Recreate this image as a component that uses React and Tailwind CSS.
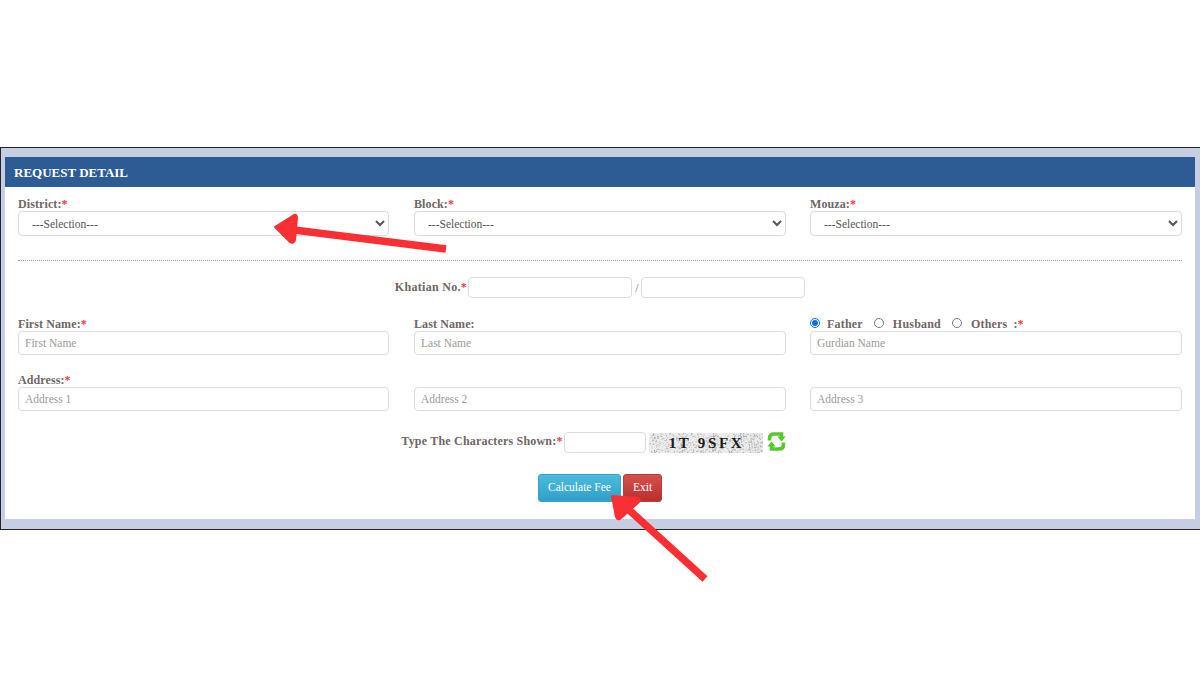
import React from "react";

const font = { fontFamily: '"Liberation Serif", "Times New Roman", serif' };
const Star = () => <span className="text-[#e8393f]">*</span>;

const Label = ({ children, req }) => (
  <label className="block h-[14px] text-[12px] leading-[14px] font-bold text-[#6f6666] tracking-[0.1px]">
    {children}
    {req && <Star />}
  </label>
);

const Select = () => (
  <select className="block w-full h-[25px] rounded-[4px] border border-[#d6dbe0] bg-white pl-[9px] pr-[2px] text-[11.5px] text-[#555]">
    <option>---Selection---</option>
  </select>
);

const Input = ({ placeholder, className = "w-full h-[24px]" }) => (
  <input
    placeholder={placeholder}
    className={`block rounded-[4px] border border-[#d9dde1] bg-white px-[6px] text-[11.5px] text-[#555] placeholder:text-[#9a9a9a] ${className}`}
  />
);

const Radio = ({ checked, label, first }) => (
  <>
    <input
      type="radio"
      name="relation"
      defaultChecked={checked}
      className="m-0 h-[10px] w-[10px] accent-[#0b6ff0] -translate-y-[1px]"
    />
    <span className={`${first ? "ml-[7px]" : "ml-[9px]"} mr-[11px] text-[12px] leading-[15px] font-bold text-[#6f6666] tracking-[0.2px]`}>{label}</span>
  </>
);

function noise() {
  const dots = [];
  let s = 37;
  for (let i = 0; i < 650; i++) {
    s = (s * 9301 + 49297) % 233280;
    const x = (s / 233280) * 114;
    s = (s * 9301 + 49297) % 233280;
    const y = (s / 233280) * 20;
    s = (s * 9301 + 49297) % 233280;
    const g = 140 + Math.floor((s / 233280) * 90);
    dots.push(<rect key={i} x={x} y={y} width="1" height="1" fill={`rgb(${g},${g},${g})`} />);
  }
  return dots;
}

const Captcha = () => (
  <div className="relative ml-[3px] h-[20px] w-[114px] bg-[#ececec] overflow-hidden">
    <svg className="absolute inset-0" width="114" height="20">{noise()}</svg>
    <span className="absolute left-[20px] top-0 text-[15px] leading-[20px] font-bold text-[#1c1c1c] tracking-[2.7px] whitespace-pre">
      1T 9SFX
    </span>
  </div>
);

const Refresh = () => (
  <svg width="19" height="21" viewBox="0 0 19 21" className="ml-[4px] -translate-y-[1px]">
    <g fill="none" stroke="#58c92a" strokeWidth="3.6">
      <path d="M2.6 9.5 V7 Q2.6 3 7 3 H14.5 V6" />
      <path d="M16.4 11.5 V14 Q16.4 18 12 18 H4.5 V15" />
    </g>
    <path d="M10.3 5.6 H18.7 L14.5 10.4 Z" fill="#58c92a" />
    <path d="M0.3 15.4 H8.7 L4.5 10.6 Z" fill="#58c92a" />
  </svg>
);

const Arrows = () => (
  <svg className="absolute left-0 top-0 pointer-events-none" width="1200" height="675">
    <path d="M446 249 L294 230" stroke="#f92f33" strokeWidth="7.5" fill="none" />
    <path d="M275 227 L294 215 Q297 214 297 218 L295 240 Q294 244 290 242 Z" fill="#f92f33" stroke="#f92f33" strokeWidth="2" strokeLinejoin="round" />
    <path d="M705 579 L628 509" stroke="#f92f33" strokeWidth="7.5" fill="none" />
    <path d="M612 496 L637 498 Q641 499 639 502 L621 518 Q618 521 616 517 Z" fill="#f92f33" stroke="#f92f33" strokeWidth="2" strokeLinejoin="round" />
  </svg>
);

export default function App() {
  return (
    <div className="relative h-[675px] w-[1200px] overflow-hidden bg-white pt-[147px]" style={font}>
      <div className="h-[383px] border-y border-l border-[#23232f] border-r-0 bg-[#c6cee4] pl-[4px] pr-[5px] pt-[9px]">
        <div className="h-[362px] bg-white">
          <div className="h-[30px] bg-[#2d5b94] pl-[9px] text-[13px] leading-[31px] font-bold text-white">
            REQUEST DETAIL
          </div>
          <div className="px-[13px]">
            <div className="mt-[10px] grid grid-cols-[371px_372px_1fr] gap-x-[25px]">
              <div><Label req>District:</Label><Select /></div>
              <div><Label req>Block:</Label><Select /></div>
              <div className="-ml-[1px]"><Label req>Mouza:</Label><Select /></div>
            </div>

            <div className="mt-[24px] border-t border-dotted border-[#9a9a9a]" />

            <div className="mt-[16px] flex h-[21px] items-center justify-center">
              <span className="mr-[1px] -translate-y-[1px] text-[12px] font-bold text-[#6f6666] tracking-[0.3px]">Khatian No.<Star /></span>
              <Input className="w-[164px] h-[21px]" />
              <span className="mx-[3px] w-[3px] text-[12px] text-[#777]">/</span>
              <Input className="w-[164px] h-[21px]" />
            </div>

            <div className="mt-[19px] grid grid-cols-[371px_372px_1fr] gap-x-[25px]">
              <div><Label req>First Name:</Label><Input placeholder="First Name" /></div>
              <div><Label>Last Name:</Label><Input placeholder="Last Name" /></div>
              <div className="-ml-[1px]">
                <div className="flex h-[14px] items-center">
                  <Radio checked first label="Father" />
                  <Radio label="Husband" />
                  <Radio label="Others" />
                  <span className="-ml-[8px] text-[12px] font-bold text-[#6f6666]">&nbsp;:<Star /></span>
                </div>
                <Input placeholder="Gurdian Name" />
              </div>
            </div>

            <div className="mt-[18px] grid grid-cols-[371px_372px_1fr] gap-x-[25px]">
              <div><Label req>Address:</Label><Input placeholder="Address 1" /></div>
              <div className="pt-[14px]"><Input placeholder="Address 2" /></div>
              <div className="-ml-[1px] pt-[14px]"><Input placeholder="Address 3" /></div>
            </div>

            <div className="mt-[21px] flex h-[21px] items-center justify-center pr-[13px]">
              <span className="mr-[1px] -translate-y-[2px] text-[12px] font-bold text-[#6f6666] tracking-[0.2px]">Type The Characters Shown:<Star /></span>
              <Input className="w-[82px] h-[21px]" />
              <Captcha />
              <Refresh />
            </div>

            <div className="mt-[21px] flex justify-center gap-[2px]">
              <button className="h-[28px] w-[83px] rounded-[3px] bg-gradient-to-b from-[#4dbbdc] to-[#2fa0c8] border border-[#3aa4c8] text-[11.5px] text-white">
                Calculate Fee
              </button>
              <button className="h-[28px] w-[39px] rounded-[3px] bg-gradient-to-b from-[#d5504d] to-[#b92f2d] border border-[#b93b38] text-[11.5px] text-white">
                Exit
              </button>
            </div>
          </div>
        </div>
      </div>
      <Arrows />
    </div>
  );
}
